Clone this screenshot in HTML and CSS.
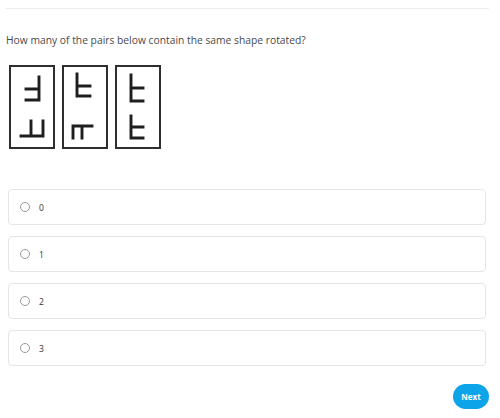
FILE: index.html
```html
<!DOCTYPE html>
<html>
<head>
<meta charset="utf-8">
<link rel="stylesheet" href="styles.css">
</head>
<body>
<div class="page">
  <div class="rule"></div>
  <p class="question">How many of the pairs below contain the same shape rotated?</p>
  <div class="figure">
    <div class="panel">
      <svg width="42" height="80" viewBox="0 0 42 80"><path d="M15 22 H28 M28 10 V33 H15 M10 69 H32 V54 M20 69 V54"/></svg>
    </div>
    <div class="panel">
      <svg width="42" height="80" viewBox="0 0 42 80"><path d="M13 7 V29 H26 M13 19 H26 M9 71 V59 H28 M18 59 V71"/></svg>
    </div>
    <div class="panel">
      <svg width="42" height="80" viewBox="0 0 42 80"><path d="M14 8 V34 H26 M14 21 H26 M14 49 V71 H26 M14 60 H26"/></svg>
    </div>
  </div>
  <div class="options">
    <label class="option"><span class="radio"></span><span class="label">0</span></label>
    <label class="option"><span class="radio"></span><span class="label">1</span></label>
    <label class="option"><span class="radio"></span><span class="label">2</span></label>
    <label class="option"><span class="radio"></span><span class="label">3</span></label>
  </div>
  <div class="actions">
    <button class="next">Next</button>
  </div>
</div>
</body>
</html>
```
FILE: styles.css
```css
html, body {
  margin: 0;
  padding: 0;
  background: #ffffff;
}
.page {
  width: 500px;
  height: 418px;
  box-sizing: border-box;
  padding: 8px 11px 0 6px;
  font-family: "Open Sans", "Noto Sans", sans-serif;
}
.rule {
  height: 1px;
  background: #ececec;
}
.question {
  margin: 25px 0 0 0;
  font-size: 10.3px;
  line-height: 12px;
  color: #4a4a4a;
}
.figure {
  display: flex;
  gap: 7px;
  margin: 19px 0 0 3px;
}
.panel {
  width: 46px;
  height: 84px;
  box-sizing: border-box;
  border: 2px solid #2e2e2e;
}
.panel svg {
  display: block;
}
.panel path {
  fill: none;
  stroke: #1e1e1e;
  stroke-width: 2.9;
  stroke-linecap: square;
  stroke-linejoin: miter;
}
.options {
  display: flex;
  flex-direction: column;
  gap: 11px;
  margin: 40px 3px 0 2px;
}
.option {
  display: flex;
  align-items: center;
  height: 36px;
  box-sizing: border-box;
  border: 1px solid #e2e5ea;
  border-radius: 4px;
  padding-left: 11px;
}
.radio {
  width: 8px;
  height: 8px;
  border: 1px solid #9a9a9a;
  border-radius: 50%;
  background: #fff;
}
.label {
  margin-left: 9px;
  font-size: 8.5px;
  color: #333;
}
.actions {
  display: flex;
  justify-content: flex-end;
  margin-top: 18px;
}
.next {
  width: 36px;
  height: 25px;
  border: none;
  border-radius: 13px;
  background: #0ea4ea;
  color: #fff;
  font-family: "Open Sans", "Noto Sans", sans-serif;
  font-weight: 700;
  font-size: 8px;
  padding: 0;
}
```
